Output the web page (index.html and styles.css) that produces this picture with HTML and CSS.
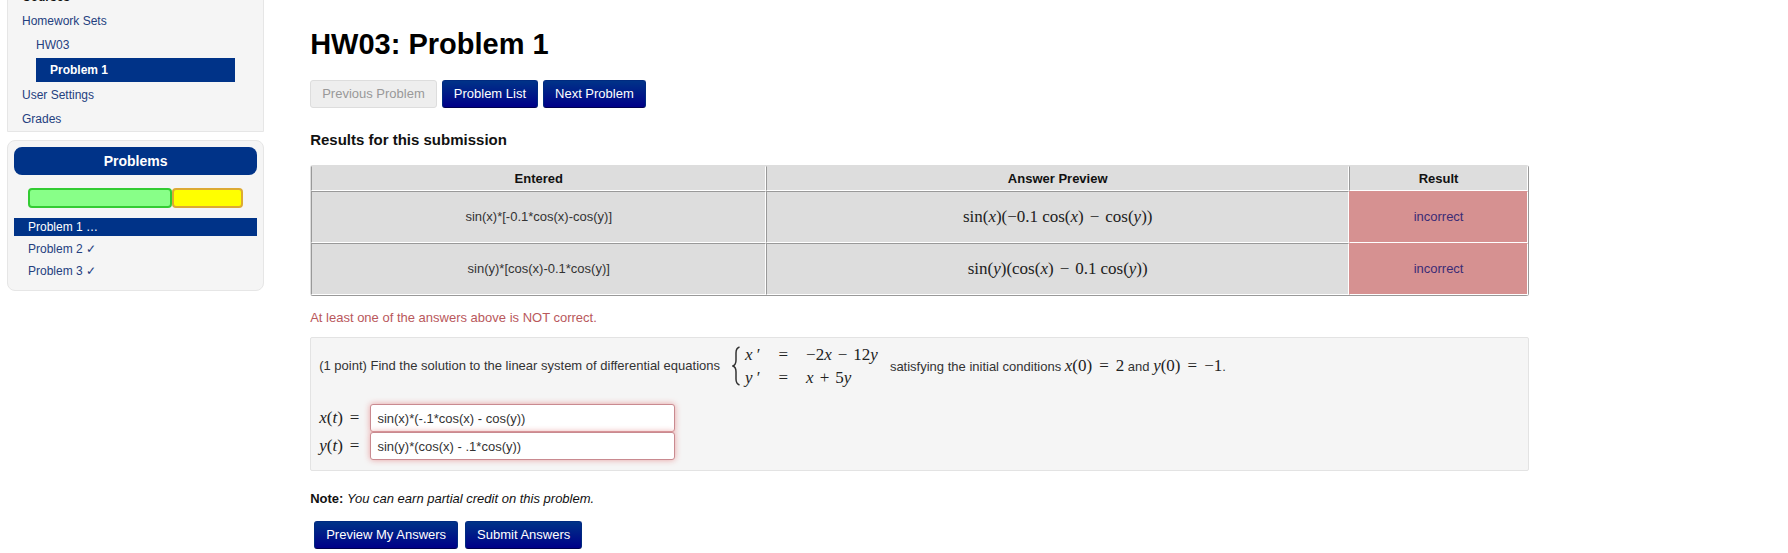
FILE: index.html
```html
<!DOCTYPE html>
<html lang="en">
<head>
<meta charset="utf-8">
<title>HW03: Problem 1</title>
<link rel="stylesheet" href="styles.css">
</head>
<body>
<div class="page">
  <aside class="sidebar">
    <nav class="panel site-nav" aria-label="Main menu">
      <ul class="nav-list">
        <li class="nav-title">Courses</li>
        <li><a href="#">Homework Sets</a>
          <ul class="nav-sub">
            <li><a href="#">HW03</a>
              <ul class="nav-problems">
                <li class="nav-active"><a href="#">Problem 1</a></li>
              </ul>
            </li>
          </ul>
        </li>
        <li><a href="#">User Settings</a></li>
        <li><a href="#">Grades</a></li>
      </ul>
    </nav>
    <section class="panel problems">
      <h2 class="problems-title">Problems</h2>
      <div class="progress">
        <div class="progress-done" style="width: 67%"></div>
        <div class="progress-left"></div>
      </div>
      <ul class="problem-list">
        <li class="current"><a href="#">Problem 1 …</a></li>
        <li><a href="#">Problem 2 ✓</a></li>
        <li><a href="#">Problem 3 ✓</a></li>
      </ul>
    </section>
  </aside>

  <main class="content">
    <h1>HW03: Problem 1</h1>
    <div class="buttons">
      <button type="button" class="btn" disabled>Previous Problem</button>
      <button type="button" class="btn btn-primary">Problem List</button>
      <button type="button" class="btn btn-primary">Next Problem</button>
    </div>

    <h3>Results for this submission</h3>
    <table class="results">
      <thead>
        <tr><th class="col-entered">Entered</th><th class="col-preview">Answer Preview</th><th class="col-result">Result</th></tr>
      </thead>
      <tbody>
        <tr>
          <td>sin(x)*[-0.1*cos(x)-cos(y)]</td>
          <td><span class="math">sin(<i>x</i>)(−0.1<span class="thin">cos(<i>x</i>)</span><span class="op">−</span>cos(<i>y</i>))</span></td>
          <td class="wrong"><a href="#">incorrect</a></td>
        </tr>
        <tr>
          <td>sin(y)*[cos(x)-0.1*cos(y)]</td>
          <td><span class="math">sin(<i>y</i>)(cos(<i>x</i>)<span class="op">−</span>0.1<span class="thin">cos(<i>y</i>))</span></span></td>
          <td class="wrong"><a href="#">incorrect</a></td>
        </tr>
      </tbody>
    </table>
    <p class="alert">At least one of the answers above is NOT correct.</p>

    <form class="problem">
      <div class="statement">
        <span>(1 point) Find the solution to the linear system of differential equations</span>
        <span class="system math">
          <svg class="brace" width="8" height="40" viewBox="0 0 8 40" aria-hidden="true"><path d="M7.500 1C4.500 2 4 4 4 7V14C4 17.500 3.500 19 1 20C3.500 21 4 22.500 4 26V33C4 36 4.500 38 7.500 39" fill="none" stroke="#333" stroke-width="1.500"/></svg>
          <span class="equations">
            <span><i>x</i> ′</span><span>=</span><span>−2<i>x</i><span class="op">−</span>12<i>y</i></span>
            <span><i>y</i> ′</span><span>=</span><span><i>x</i><span class="op">+</span>5<i>y</i></span>
          </span>
        </span>
        <span>satisfying the initial conditions <span class="math"><i>x</i>(0)<span class="rel">=</span>2</span> and <span class="math"><i>y</i>(0)<span class="rel">=</span>−1</span>.</span>
      </div>
      <div class="answer">
        <label class="math" for="ans1"><i>x</i>(<i>t</i>)<span class="rel">=</span></label>
        <input id="ans1" type="text" value="sin(x)*(-.1*cos(x) - cos(y))">
      </div>
      <div class="answer">
        <label class="math" for="ans2"><i>y</i>(<i>t</i>)<span class="rel">=</span></label>
        <input id="ans2" type="text" value="sin(y)*(cos(x) - .1*cos(y))">
      </div>
    </form>

    <p class="note"><b>Note:</b> <em>You can earn partial credit on this problem.</em></p>
    <div class="buttons submit">
      <button type="button" class="btn btn-primary">Preview My Answers</button>
      <button type="button" class="btn btn-primary">Submit Answers</button>
    </div>
  </main>
</div>
</body>
</html>
```
FILE: styles.css
```css
* { box-sizing: border-box; }
body {
  margin: 0;
  background: #fff;
  color: #333;
  font: 13px/20px "Liberation Sans", Arial, sans-serif;
  overflow: hidden;
}
a { color: #24407f; text-decoration: none; }
ul { list-style: none; margin: 0; padding: 0; }

.page {
  display: grid;
  grid-template-columns: 211fr 1000fr;
  column-gap: 46px;
  padding: 0 259px 0 7px;
}

/* Sidebar */
.sidebar { display: flex; flex-direction: column; gap: 8px; }
.panel { background: #f5f5f5; border: 1px solid #e6e6e6; }
.site-nav {
  margin-top: -24px;
  padding: 8px 28px 0 14px;
  border-radius: 6px 6px 0 0;
  font-size: 12px;
  line-height: 24px;
}
.nav-title { color: #111; font-weight: bold; }
.nav-sub { margin: 0 0 1px 14px; }
.nav-problems { margin-top: 1px; }
.nav-active { background: #003388; padding-left: 14px; }
.nav-active a { color: #fff; font-weight: bold; }

.problems { border-radius: 8px; padding: 6px 6px 10px; }
.problems-title {
  margin: 0 0 13px;
  border-radius: 8px;
  background: #003388;
  color: #fff;
  font-size: 14px;
  line-height: 28px;
  text-align: center;
}
.progress { display: flex; height: 20px; margin: 0 14px 10px; }
.progress-done { background: #8f8; border: 2px solid #3c3; border-radius: 4px; }
.progress-left { flex: 1; background: #ff0; border: 2px solid #da3; border-radius: 4px; }
.problem-list { display: flex; flex-direction: column; gap: 4px; font-size: 12px; line-height: 18px; }
.problem-list li { padding-left: 14px; }
.problem-list .current { background: #003388; }
.current a { color: #fff; }

/* Main column */
h1 { margin: 24px 0 16px; color: #000; font-size: 29px; line-height: 40px; }
h3 { margin: 22px 0 15px; color: #111; font-size: 15px; line-height: 20px; }
.buttons { display: flex; gap: 5px; }
.btn {
  border: 1px solid #ddd;
  border-radius: 3px;
  padding: 3px 11px;
  background: #eee;
  color: #999;
  font: 13px/20px "Liberation Sans", Arial, sans-serif;
}
.btn-primary {
  border-color: #002a80 #002a80 #000050;
  background: linear-gradient(#003388, #000088);
  color: #fff;
}

.results {
  width: 100%;
  border: 1px solid;
  border-color: #ddd #999 #999 #ddd;
  border-radius: 3px;
  border-spacing: 0;
  table-layout: fixed;
}
.results th, .results td {
  border: 1px solid;
  border-color: #999 #fff #fff #999;
  padding: 0 4px;
  background: #ddd;
  text-align: center;
}
.results th { height: 25px; border-top-color: #ddd; color: #111; }
.results td { height: 52px; }
.results .wrong { background: #d69191; border-top-color: #d69191; border-left-color: #d69191; }
.wrong a { color: #3b2c76; }
.col-entered { width: 37.4%; }
.col-preview { width: 47.9%; }
.col-result { width: 14.7%; }

.math { color: #222; font-family: "Liberation Serif", "Times New Roman", serif; font-size: 17px; white-space: nowrap; }
.op { margin: 0 6px; }
.rel { margin: 0 7px; }
.thin { margin-left: 4px; }

.alert { margin: 12px 0 9px; color: #b9585c; }

.problem {
  padding: 5px 8px 10px;
  border: 1px solid #e3e3e3;
  border-radius: 2px;
  background: #f5f5f5;
}
.statement { display: flex; align-items: center; gap: 12px; margin-bottom: 15px; }
.system { display: flex; align-items: center; gap: 5px; }
.equations { display: grid; grid-template-columns: auto auto auto; column-gap: 18px; line-height: 23px; }
.answer { display: flex; align-items: center; gap: 4px; }
.answer input {
  width: 305px;
  height: 28px;
  border: 1px solid #c98a90;
  border-radius: 3px;
  padding: 4px 6px;
  background: #fff;
  color: #333;
  font: 13px/20px "Liberation Sans", Arial, sans-serif;
  box-shadow: 0 0 6px #e8a0a0;
}

.note { margin: 18px 0 12px; color: #111; }
.submit { gap: 7px; padding-left: 4px; }
```
